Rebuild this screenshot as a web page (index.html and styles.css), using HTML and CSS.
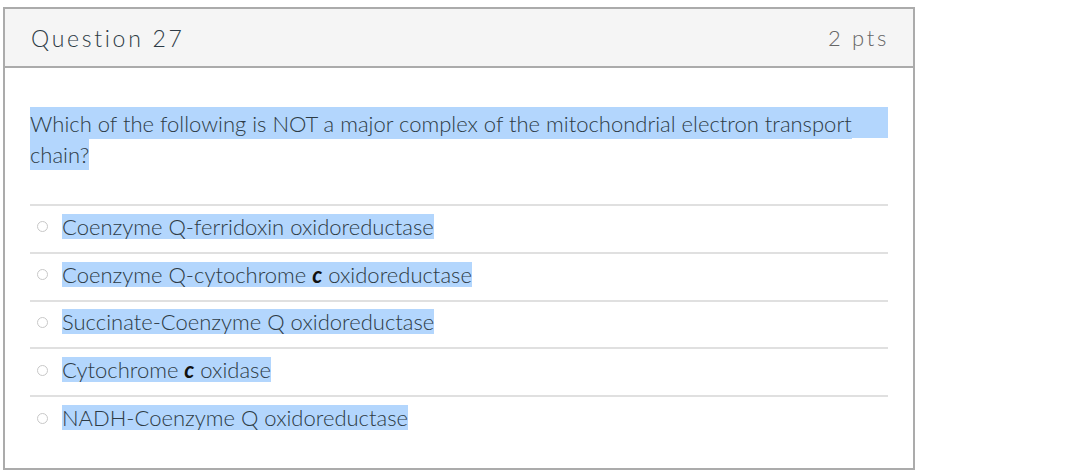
FILE: index.html
```html
<!DOCTYPE html>
<html>
<head>
<meta charset="utf-8">
<link rel="stylesheet" href="styles.css">
</head>
<body>
<div class="question">
  <div class="header">
    <span class="title">Question 27</span>
    <span class="pts">2 pts</span>
  </div>
  <div class="body">
    <p class="qtext"><span class="sel">Which of the following is NOT a major complex of the mitochondrial electron transport chain?</span></p>
    <div class="answers">
      <div class="answer"><span class="radio"></span><span class="sel">Coenzyme Q-ferridoxin oxidoreductase</span></div>
      <div class="answer"><span class="radio"></span><span class="sel">Coenzyme Q-cytochrome <b class="it">c</b> oxidoreductase</span></div>
      <div class="answer"><span class="radio"></span><span class="sel">Succinate-Coenzyme Q oxidoreductase</span></div>
      <div class="answer"><span class="radio"></span><span class="sel">Cytochrome <b class="it">c</b> oxidase</span></div>
      <div class="answer"><span class="radio"></span><span class="sel">NADH-Coenzyme Q oxidoreductase</span></div>
    </div>
  </div>
</div>
</body>
</html>
```

FILE: styles.css
```css
html, body {
  margin: 0;
  padding: 0;
  background: #fff;
}
body {
  font-family: Lato, "Open Sans", sans-serif;
  font-weight: 300;
  color: #2d3b45;
}
.question {
  margin: 7px 0 0 3px;
  width: 908px;
  border: 2px solid #ababab;
}
.header {
  height: 57px;
  background: #f5f5f5;
  border-bottom: 2px solid #ababab;
  display: flex;
  align-items: center;
  justify-content: space-between;
  padding: 0 24px 0 26px;
}
.title {
  font-size: 23px;
  letter-spacing: 2.7px;
  color: #2d3b45;
}
.pts {
  font-size: 22px;
  letter-spacing: 2.7px;
  color: #666;
}
.body {
  padding: 39px 25px 25px 25px;
}
.qtext {
  margin: 0 0 34px 0;
  font-size: 22px;
  line-height: 31.5px;
  background: linear-gradient(#b3d6fd, #b3d6fd) no-repeat 0 0 / 100% 31px;
}
.qtext .sel {
  padding: 2.5px 0;
}
.sel {
  background: #b3d6fd;
}
.answers {
  display: flex;
  flex-direction: column;
}
.answer {
  border-top: 2px solid #e0e0e0;
  display: flex;
  align-items: center;
  height: 45.8px;
  font-size: 22px;
  line-height: 25px;
}
.answer .sel {
  margin-top: -5px;
}
.radio {
  width: 9px;
  height: 9px;
  border: 1px solid #c8c8c8;
  border-radius: 50%;
  margin: -4px 14px 0 7px;
  flex: none;
}
.it {
  font-style: italic;
  font-weight: 700;
  color: #111;
}
```
